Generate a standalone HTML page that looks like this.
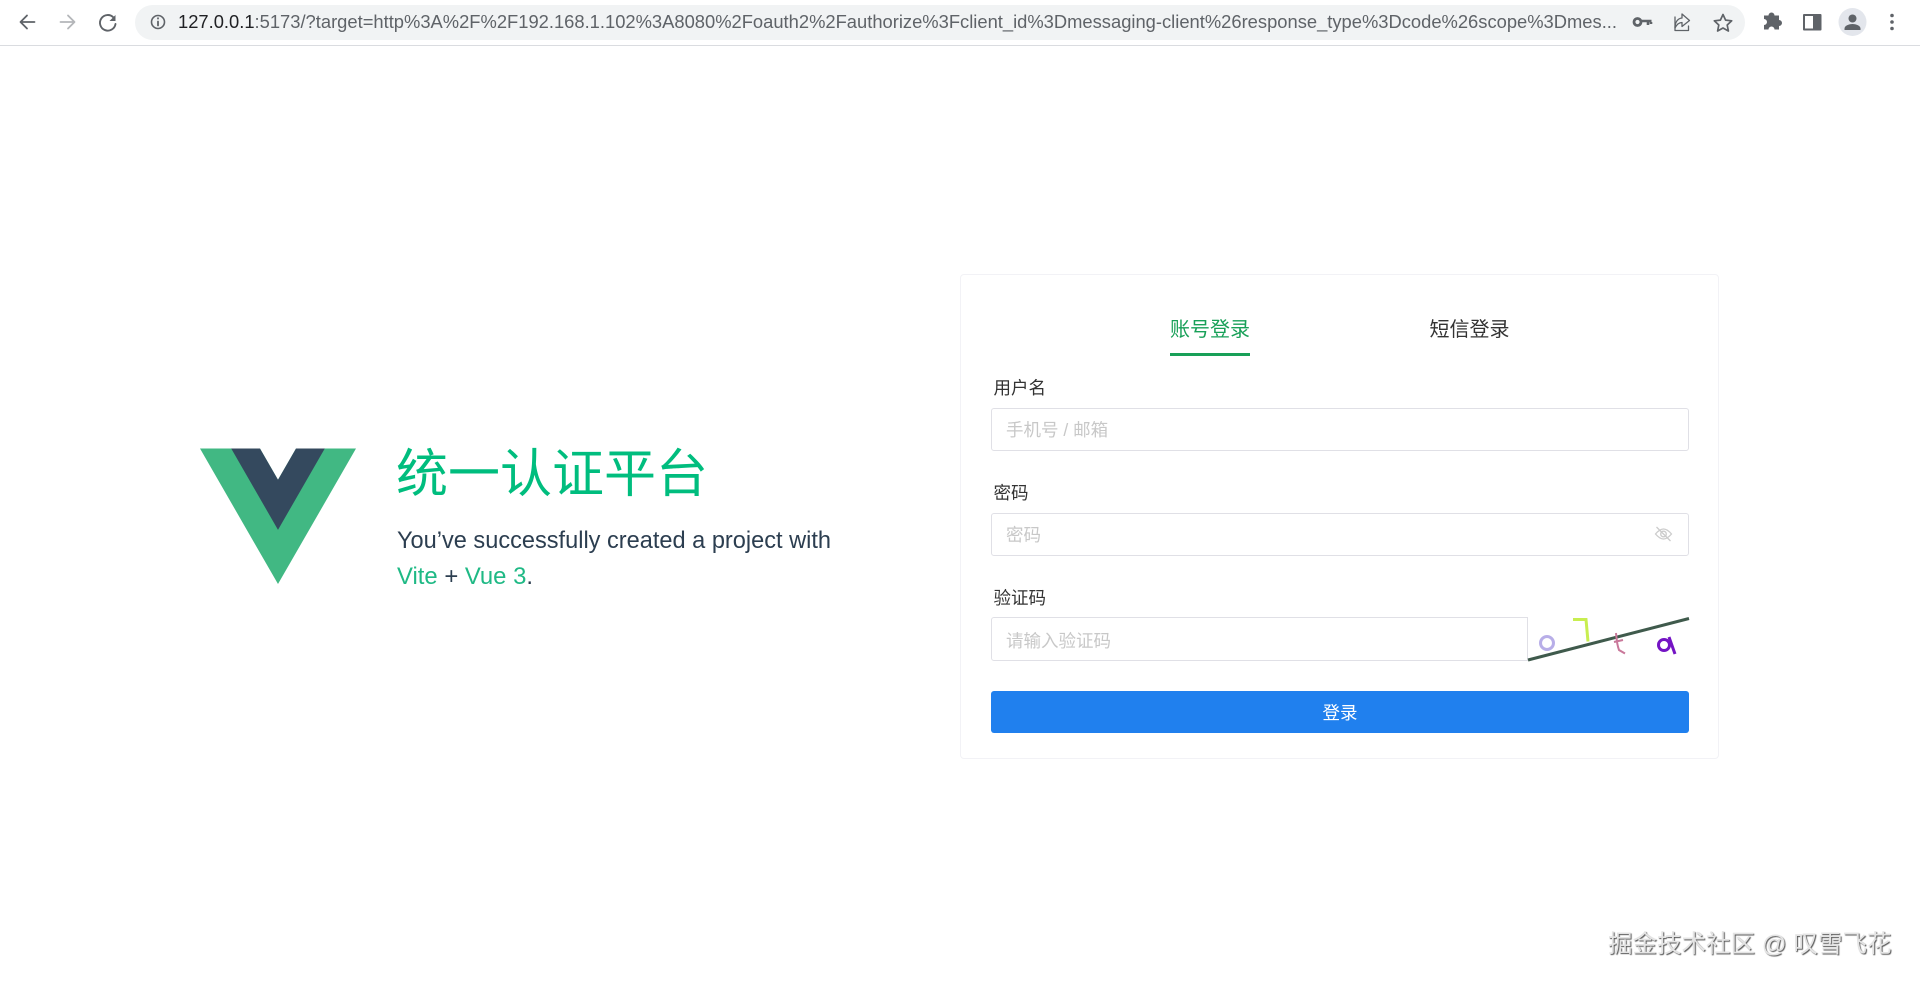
<!DOCTYPE html>
<html lang="zh"><head><meta charset="utf-8"><title>统一认证平台</title>
<style>
html,body{margin:0;padding:0;background:#fff;width:1920px;height:986px;overflow:hidden}
body{position:relative;font-family:"Liberation Sans","Noto Sans CJK SC",sans-serif;color:#2c3e50}
.a{position:absolute;white-space:nowrap}
.box{position:absolute;box-sizing:border-box;border:1px solid #e0e0e6;background:#fff}
.lab{font-size:17.5px;line-height:24px;color:#333;left:993.500px}
.ph{font-size:17.5px;line-height:24px;color:#c8c8c8;left:1006px}
svg{position:absolute;left:0;top:0}
</style></head><body>
<div class="a" style="left:0;top:45px;width:1920px;height:1px;background:#dadce0"></div>
<div class="a" style="left:135px;top:5px;width:1610px;height:35px;border-radius:18px;background:#f1f3f4"></div>
<div class="box" style="left:960px;top:274px;width:759px;height:485px;border-color:#f2f2f6;border-radius:4px"></div>
<div class="a" style="left:1170px;top:316px;font-size:20px;line-height:28px;color:#18a058">账号登录</div>
<div class="a" style="left:1170px;top:353px;width:80px;height:3px;background:#18a058"></div>
<div class="a" style="left:1429.500px;top:316px;font-size:20px;line-height:28px;color:#333">短信登录</div>
<div class="a lab" style="top:375.500px">用户名</div>
<div class="box" style="left:991px;top:408px;width:698px;height:43px;border-radius:3px"></div>
<div class="a ph" style="top:418px">手机号 / 邮箱</div>
<div class="a lab" style="top:480.500px">密码</div>
<div class="box" style="left:991px;top:513px;width:698px;height:43px;border-radius:3px"></div>
<div class="a ph" style="top:523px">密码</div>
<div class="a lab" style="top:585.500px">验证码</div>
<div class="box" style="left:991px;top:617px;width:537px;height:44px;border-radius:3px 0 0 3px"></div>
<div class="a ph" style="top:628.500px">请输入验证码</div>
<div class="a" style="left:991px;top:691px;width:698px;height:42px;background:#2080ee;border-radius:3px;color:#fff;font-size:17.5px;line-height:44px;text-align:center">登录</div>
<div class="a" style="left:396px;top:438px;font-size:52px;line-height:74px;font-weight:400;color:#00bd7e">统一认证平台</div>
<svg width="1920" height="986" viewBox="0 0 1920 986" fill="none">
<text x="178" y="28" font-size="18.500" font-family="Liberation Sans,sans-serif" fill="#5f6368" textLength="1439" lengthAdjust="spacingAndGlyphs"><tspan fill="#202124">127.0.0.1</tspan>:5173/?target=http%3A%2F%2F192.168.1.102%3A8080%2Foauth2%2Fauthorize%3Fclient_id%3Dmessaging-client%26response_type%3Dcode%26scope%3Dmes...</text>
<text x="397" y="548" font-size="24.500" font-family="Liberation Sans,sans-serif" fill="#2c3e50" textLength="434" lengthAdjust="spacingAndGlyphs">You’ve successfully created a project with</text>
<text x="397" y="584" font-size="24.500" font-family="Liberation Sans,sans-serif" fill="#2c3e50" textLength="136" lengthAdjust="spacingAndGlyphs"><tspan fill="#1fb985">Vite</tspan> + <tspan fill="#1fb985">Vue 3</tspan>.</text>
<g transform="translate(200 448.500) scale(.596 .598)">
<path d="M161.096.001l-30.225 52.351L100.647.001H-.005l130.877 226.688L261.749.001z" fill="#41b883"/>
<path d="M161.096.001l-30.225 52.351L100.647.001H52.346l78.526 136.01L209.398.001z" fill="#34495e"/>
</g>
<g stroke-linecap="round" stroke-linejoin="round">
<path d="M34.500 22H20.500M27 15.500L20.500 22 27 28.500" stroke="#5f6368" stroke-width="1.800"/>
<path d="M60.500 22h14M68 15.500l6.500 6.500-6.500 6.500" stroke="#b4b6b9" stroke-width="1.800"/>
<path d="M113.500 17.500a7.800 7.800 0 1 0 2 6.500" stroke="#5f6368" stroke-width="1.900"/>
<path d="M115.500 15v6H109.500z" fill="#5f6368"/>
<circle cx="158" cy="22" r="6.500" stroke="#5f6368" stroke-width="1.600"/>
<path d="M158 21.500v4M158 18.200v.4" stroke="#5f6368" stroke-width="1.800"/>
<circle cx="1637.500" cy="22" r="3.500" stroke="#5f6368" stroke-width="2.800"/>
<path d="M1641 21h10.500M1648 22v3M1651 22v2" stroke="#5f6368" stroke-width="2.600" stroke-linecap="butt"/>
<path d="M1675 17v13.500h13.500V26" stroke="#5f6368" stroke-width="1.300"/>
<path d="M1689.500 20.500L1682 14v4c-5 .5-7 5-7 10 2-4 4-5.500 7-5.500v4z" stroke="#5f6368" stroke-width="1.300"/>
<path d="M1723 14.500l2.600 5.600 6.100.7-4.500 4.200 1.200 6-5.400-3-5.400 3 1.200-6-4.500-4.200 6.100-.7z" stroke="#5f6368" stroke-width="1.700"/>
<path d="M1764 18.500h4.500a3 3 0 0 1 6 0h4.500v4.500a3 3 0 0 1 0 6v3.500h-4.500a3 3 0 0 0-6 0H1764v-4.500a3 3 0 0 0 0-6z" fill="#5f6368" transform="translate(0 -3)"/>
<rect x="1804" y="15" width="16.500" height="14.500" stroke="#5f6368" stroke-width="2"/>
<rect x="1813" y="15" width="7.500" height="14.500" fill="#5f6368"/>
<circle cx="1852.500" cy="22" r="14" fill="#e3e6ec"/>
<circle cx="1852.500" cy="18.500" r="4" fill="#5f6368"/>
<path d="M1844.500 30v-1.500c0-3 5-4.500 8-4.500s8 1.500 8 4.500V30z" fill="#5f6368"/>
<circle cx="1892" cy="15.500" r="1.800" fill="#5f6368"/><circle cx="1892" cy="22" r="1.800" fill="#5f6368"/><circle cx="1892" cy="28.500" r="1.800" fill="#5f6368"/>
</g>
<g stroke="#cccccc" stroke-width="1.300">
<path d="M1655.500 534c3-3.500 5.500-5 8-5s5 1.500 8 5c-3 3.500-5.500 5-8 5s-5-1.500-8-5z"/><circle cx="1663.500" cy="534" r="2.800"/><path d="M1656.500 527l14 14"/>
</g>
<path d="M1528 660L1689 618.500" stroke="#3f5a4c" stroke-width="3"/>
<circle cx="1547" cy="643" r="6.500" stroke="#b8aee8" stroke-width="3"/>
<path d="M1573 619.500h13l2 22" stroke="#c8ee50" stroke-width="3"/>
<path d="M1616 633q1 12 3 17l6 3.500M1614 642l9-2" stroke="#c9789a" stroke-width="2"/>
<circle cx="1664" cy="645" r="5.500" stroke="#7414c4" stroke-width="3"/>
<path d="M1669 637l6 17" stroke="#7414c4" stroke-width="3"/>
</svg>
<div class="a" style="left:1608px;top:927px;font-size:24.500px;line-height:36px;color:#e4e4e4;text-shadow:1px 1px 1px #555">掘金技术社区 @ 叹雪飞花</div>
</body></html>
